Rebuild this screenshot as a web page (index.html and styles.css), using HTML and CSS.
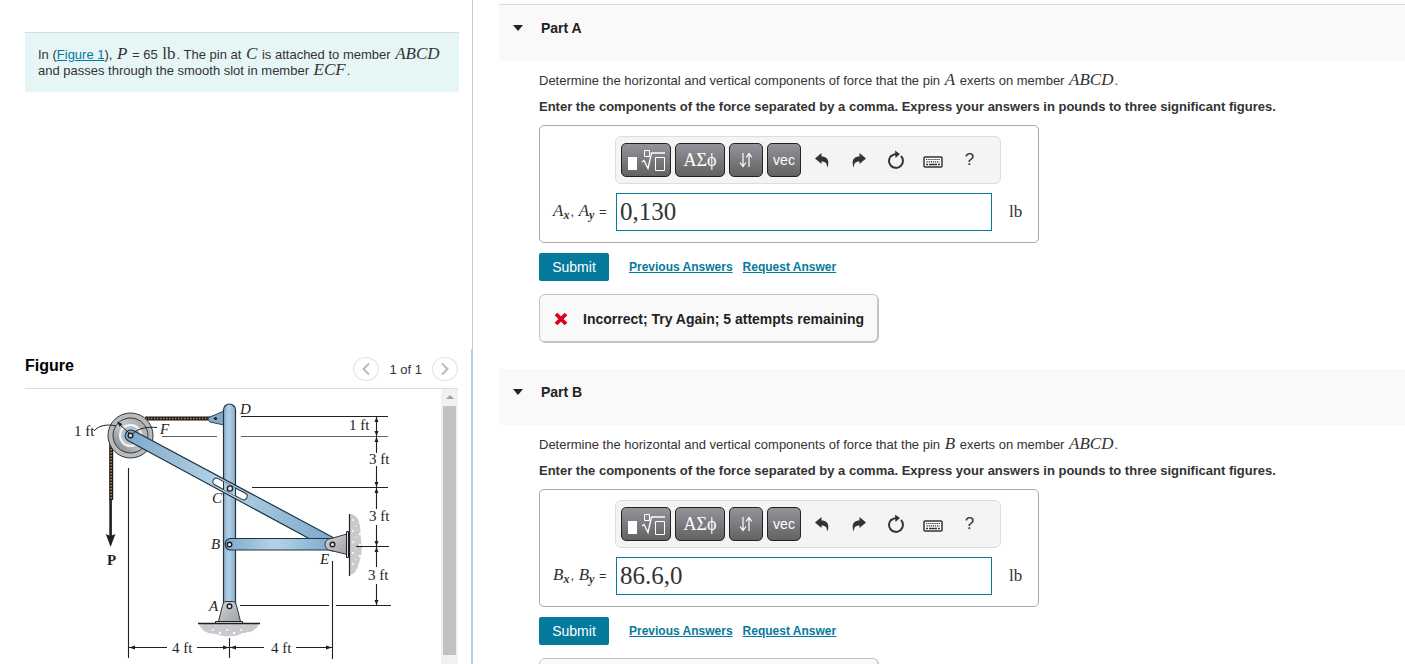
FILE: index.html
```
<!DOCTYPE html>
<html lang="en">
<head>
<meta charset="utf-8">
<title>Pin forces</title>
<link rel="stylesheet" href="styles.css">
</head>
<body>
<svg class="defs" aria-hidden="true">
  <symbol id="i-template" viewBox="0 0 38 24">
    <path d="M1 9h9v13H1z" fill="#fff"/>
    <path d="M17.5 2.500h5v6h-5zM28.500 9.500h9v13h-9z" fill="none" stroke="#fff"/>
    <path d="M15 14l2-1.500 4 8 3.500-15.500H38" fill="none" stroke="#fff" stroke-width="1.300"/>
  </symbol>
  <symbol id="i-updown" viewBox="0 0 14 16">
    <path d="M4 1v13M1 10.500l3 4 3-4M10 15V2M7 5.500l3-4 3 4" fill="none" stroke="#fff" stroke-width="1.200"/>
  </symbol>
  <symbol id="i-undo" viewBox="0 0 14 16">
    <path d="M0 6.500L6.500 1v3.500C11 4.500 13.500 7 13.300 11c0 2-.6 3.500-1.300 4.500.3-4-1.500-6-5.500-6V12z" fill="#333"/>
  </symbol>
  <symbol id="i-reset" viewBox="0 0 18 20">
    <path d="M4.500 5.500A7 7 0 1 0 14 6" fill="none" stroke="#333" stroke-width="2"/>
    <path d="M4 6.200C5.500 4.600 7 4 10 4" fill="none" stroke="#333" stroke-width="2"/>
    <path d="M8 .5L13 4 8.500 8z" fill="#333"/>
  </symbol>
  <symbol id="i-keys" viewBox="0 0 20 12">
    <rect x="1" y="1" width="18" height="10" rx="1" fill="#fff" stroke="#333" stroke-width="1.500"/>
    <path d="M3 3.500h14M3.500 5.800h13" stroke="#333" stroke-width="1.200" stroke-dasharray="1.300 .8"/>
    <path d="M3 8.500h2M6 8.500h8M15 8.500h2" stroke="#333" stroke-width="1.300"/>
  </symbol>
</svg>

<div class="page">
  <aside class="side">
    <section class="prompt-pane">
      <p class="prompt">In (<a href="#figure">Figure 1</a>), <i class="m">P</i> = 65 <span class="m">lb</span>. The pin at <i class="m">C</i> is attached to member <i class="m">ABCD</i> and passes through the smooth slot in member <i class="m">ECF</i>.</p>
    </section>
    <section class="figure-pane" id="figure">
      <header class="figure-head">
        <h2>Figure</h2>
        <div class="pager">
          <button type="button" class="round" aria-label="Previous figure"><svg width="10" height="14" viewBox="0 0 10 14"><path d="M8 1.500L2.500 7 8 12.500" fill="none" stroke="#bbb" stroke-width="2"/></svg></button>
          <span>1 of 1</span>
          <button type="button" class="round" aria-label="Next figure"><svg width="10" height="14" viewBox="0 0 10 14"><path d="M2 1.500L7.500 7 2 12.500" fill="none" stroke="#bbb" stroke-width="2"/></svg></button>
        </div>
      </header>
      <div class="figure-body">
        <svg class="diagram" viewBox="25 389 416 275" role="img" aria-label="Frame with pulley at F, slotted member ECF and member ABCD">
          <defs>
            <linearGradient id="bar" x1="0" x2="1" y1="0" y2="0"><stop offset="0" stop-color="#86abc9"/><stop offset=".4" stop-color="#b4d0e4"/><stop offset="1" stop-color="#8db1cf"/></linearGradient>
            <linearGradient id="beam" x1="0" x2="1" y1="0" y2="0"><stop offset="0" stop-color="#7fa8c8"/><stop offset=".45" stop-color="#b5d3e8"/><stop offset="1" stop-color="#7ba7ca"/></linearGradient>
            <linearGradient id="wheel" x1="0" x2="1" y1="1" y2="0"><stop offset="0" stop-color="#6f777d"/><stop offset=".5" stop-color="#c9ccce"/><stop offset="1" stop-color="#9ea2a4"/></linearGradient>
            <linearGradient id="metal" x1="0" x2="1" y1="0" y2="1"><stop offset="0" stop-color="#d2d4d8"/><stop offset="1" stop-color="#9da2a8"/></linearGradient>
            <pattern id="stone" width="14" height="11" patternUnits="userSpaceOnUse"><path d="M0 0h14v11H0z" fill="#cbc9cd"/><circle cx="3" cy="3" r="1" fill="#fff"/><circle cx="10" cy="6" r="1.200" fill="#fff"/><circle cx="6" cy="9" r=".7" fill="#eee"/></pattern>
            <clipPath id="slot"><rect x="211" y="485.500" width="38" height="7" rx="3.500" transform="rotate(28.300 230 489)"/></clipPath>
          </defs>

          <g stroke="#231f20" stroke-width="1.100" fill="none">
            <path d="M241 416.500h147M252 487.500h136M356 546.500h33M240 605.500h89M336 605.500h55"/>
            <path d="M162 436.500h55M241 436.500h147" stroke="#666"/>
            <path d="M376.500 417v36M376.500 466v43M376.500 525v42M376.500 584v21"/>
            <path d="M128.500 468v190M229.500 638v20M332.500 561v98"/>
            <path d="M129 647.500h38M197 647.500h67M296 647.500h36"/>
          </g>
          <g fill="#231f20">
            <path d="M376.500 417l2 5h-4zM376.500 436l2-5h-4zM376.500 437l2 5h-4zM376.500 487l2-5h-4zM376.500 488l2 5h-4zM376.500 546l2-5h-4zM376.500 547l2 5h-4zM376.500 605l2-5h-4z"/>
            <path d="M129 647.500l6-2v4zM229 647.500l-6-2v4zM230 647.500l6-2v4zM332 647.500l-6-2v4z"/>
          </g>

          <path d="M145 418.500h72M111.200 440v60" stroke="#211a16" stroke-width="4"/>
          <path d="M145 418.500h72M111.200 440v60" stroke="#a28868" stroke-width="1.600" stroke-dasharray="1.500 1.500"/>
          <path d="M110.600 499v38" stroke="#231f20" stroke-width="2.600"/>
          <path d="M110.600 547l-4.800-13 4.800 2 4.800-2z" fill="#231f20"/>

          <circle cx="130.500" cy="435.500" r="22.500" fill="#b8babc" stroke="#35383a"/>
          <circle cx="130.500" cy="435.500" r="17.500" fill="url(#wheel)" stroke="#35383a"/>
          <circle cx="130.500" cy="435.500" r="10.500" fill="#b9c2c8" stroke="#f5f5f5" stroke-width="2"/>

          <path d="M224 411l-14 6q-4 2 0 5l14 3z" fill="#86a9c3" stroke="#29465c"/>
          <circle cx="215.500" cy="418.500" r="1.600" fill="#231f20"/>
          <path d="M223.500 604V410a6 6 0 0 1 12 0v194z" fill="url(#bar)" stroke="#1f3442" stroke-width="1.200"/>

          <path d="M133.200 430.500L336 539v12h-4L127.800 440.500a5.700 5.700 0 0 1 5.400-10z" fill="url(#beam)" stroke="#1f3442" stroke-width="1.200"/>
          <rect x="211" y="485.500" width="38" height="7" rx="3.500" transform="rotate(28.300 230 489)" fill="#fff" stroke="#1f3442"/>
          <path d="M223.500 475h12v30h-12z" fill="#a9c8de" stroke="#1f3442" clip-path="url(#slot)"/>
          <path d="M335 538.500H229.500a6 6 0 0 0 0 11.500H335z" fill="url(#beam)" stroke="#1f3442" stroke-width="1.200"/>

          <path d="M349.500 514c9 0 11 10 11 18s3 16 0 26-4 16-11 17z" fill="url(#stone)"/>
          <path d="M349.500 514v62" stroke="#231f20" stroke-width="1.200"/>
          <path d="M356 546.500h8" stroke="#231f20" stroke-width="1.100"/>
          <path d="M347 534l-16 4.500a6 6 0 0 0 0 12l16 4z" fill="url(#metal)" stroke="#333"/>
          <path d="M346.500 531.500h2v26h-2z" fill="#ddd" stroke="#231f20"/>

          <path d="M199 624h60c-3 7-9 9-16 9-9 5-20 4-27 1-9 0-14-3-17-10z" fill="url(#stone)"/>
          <path d="M198 623.500h62" stroke="#231f20" stroke-width="1.300"/>
          <path d="M218.500 621.500l4-16q1-4 3-4h8q2 0 3 4l4 16z" fill="url(#metal)" stroke="#333"/>
          <path d="M215.500 621.500h27v2h-27z" fill="#bbb" stroke="#231f20"/>

          <g fill="#e9e9e9" stroke="#231f20" stroke-width="1.400">
            <circle cx="130.500" cy="435.500" r="2.300"/><circle cx="230" cy="488.500" r="2.600"/><circle cx="229.500" cy="544.500" r="2.300"/><circle cx="332.500" cy="544.500" r="2.300"/><circle cx="229.500" cy="606.300" r="2.300"/>
          </g>
          <path d="M94 431c5-6 14-7 22-5M118 423l11 10M157 427.500c-10-1-19 1-24 6" fill="none" stroke="#231f20"/>
          <path d="M117 421.500l5.500 2.500-3 2.800z" fill="#231f20"/>

          <g class="dim">
            <text x="74" y="436">1 ft</text><text x="349" y="430">1 ft</text><text x="369" y="464">3 ft</text><text x="369" y="521">3 ft</text><text x="368" y="580">3 ft</text><text x="172" y="653">4 ft</text><text x="271" y="653">4 ft</text>
          </g>
          <g class="dim pt">
            <text x="240" y="414">D</text><text x="160" y="434">F</text><text x="212" y="503">C</text><text x="211" y="549">B</text><text x="320" y="564">E</text><text x="209" y="611">A</text>
          </g>
          <text class="dim load" x="107" y="565">P</text>
        </svg>
        <div class="track" aria-hidden="true"><span class="up"></span><span class="thumb"></span></div>
      </div>
    </section>
  </aside>

  <main class="main">
    <section class="part">
      <header class="part-head first"><span class="caret"></span><h2>Part A</h2></header>
      <div class="part-body">
        <p class="ask">Determine the horizontal and vertical components of force that the pin <i class="m">A</i> exerts on member <i class="m">ABCD</i>.</p>
        <p class="hint">Enter the components of the force separated by a comma. Express your answers in pounds to three significant figures.</p>
        <div class="answer">
          <div class="tools">
            <button type="button" class="key wide" aria-label="Templates"><svg width="38" height="24"><use href="#i-template"/></svg></button>
            <button type="button" class="key wide greek">ΑΣϕ</button>
            <button type="button" class="key" aria-label="Subscript and superscript"><svg width="14" height="16"><use href="#i-updown"/></svg></button>
            <button type="button" class="key">vec</button>
            <button type="button" class="tool" aria-label="Undo"><svg width="14" height="16"><use href="#i-undo"/></svg></button>
            <button type="button" class="tool" aria-label="Redo"><svg class="flip" width="14" height="16"><use href="#i-undo"/></svg></button>
            <button type="button" class="tool" aria-label="Reset"><svg width="18" height="20"><use href="#i-reset"/></svg></button>
            <button type="button" class="tool" aria-label="Keyboard shortcuts"><svg class="keys" width="20" height="12"><use href="#i-keys"/></svg></button>
            <button type="button" class="tool">?</button>
          </div>
          <label class="name" for="ans-a"><i class="m">A<sub>x</sub></i>, <i class="m">A<sub>y</sub></i> =</label>
          <input class="value" id="ans-a" type="text" value="0,130">
          <span class="unit">lb</span>
        </div>
        <div class="actions"><button type="button" class="submit">Submit</button><a href="#previous">Previous Answers</a><a href="#request">Request Answer</a></div>
        <div class="feedback"><svg width="14" height="14" viewBox="0 0 14 14"><path d="M2 2l10 10M12 2L2 12" stroke="#d9001b" stroke-width="3.800"/></svg>Incorrect; Try Again; 5 attempts remaining</div>
      </div>
    </section>

    <section class="part">
      <header class="part-head"><span class="caret"></span><h2>Part B</h2></header>
      <div class="part-body">
        <p class="ask">Determine the horizontal and vertical components of force that the pin <i class="m">B</i> exerts on member <i class="m">ABCD</i>.</p>
        <p class="hint">Enter the components of the force separated by a comma. Express your answers in pounds to three significant figures.</p>
        <div class="answer">
          <div class="tools">
            <button type="button" class="key wide" aria-label="Templates"><svg width="38" height="24"><use href="#i-template"/></svg></button>
            <button type="button" class="key wide greek">ΑΣϕ</button>
            <button type="button" class="key" aria-label="Subscript and superscript"><svg width="14" height="16"><use href="#i-updown"/></svg></button>
            <button type="button" class="key">vec</button>
            <button type="button" class="tool" aria-label="Undo"><svg width="14" height="16"><use href="#i-undo"/></svg></button>
            <button type="button" class="tool" aria-label="Redo"><svg class="flip" width="14" height="16"><use href="#i-undo"/></svg></button>
            <button type="button" class="tool" aria-label="Reset"><svg width="18" height="20"><use href="#i-reset"/></svg></button>
            <button type="button" class="tool" aria-label="Keyboard shortcuts"><svg class="keys" width="20" height="12"><use href="#i-keys"/></svg></button>
            <button type="button" class="tool">?</button>
          </div>
          <label class="name" for="ans-b"><i class="m">B<sub>x</sub></i>, <i class="m">B<sub>y</sub></i> =</label>
          <input class="value" id="ans-b" type="text" value="86.6,0">
          <span class="unit">lb</span>
        </div>
        <div class="actions"><button type="button" class="submit">Submit</button><a href="#previous">Previous Answers</a><a href="#request">Request Answer</a></div>
        <div class="feedback"></div>
      </div>
    </section>
  </main>
</div>
</body>
</html>
```
FILE: styles.css
```
* { box-sizing: border-box; }
body { margin: 0; font: 13px/16px "Liberation Sans", Arial, sans-serif; color: #333; background: #fff; }
p, h2 { margin: 0; }
a { color: #047a9c; text-decoration: underline; }
button { font-family: inherit; margin: 0; padding: 0; cursor: pointer; }
.defs { display: none; }
.m { font-family: "Liberation Serif", "Times New Roman", serif; font-size: 17px; line-height: 1px; margin: 0 1px; }

.page { display: grid; grid-template-columns: 473px minmax(0, 1fr); height: 100vh; overflow: hidden; }

.side { display: flex; flex-direction: column; min-height: 0; }
.prompt-pane { flex: 1; padding: 32px 13px 0 25px; border-right: 1px solid #b9cfe2; }
.prompt { padding: 14px 12px 12px 13px; background: #e6f6f6; border-top: 1px solid #d6dcdc; min-height: 60px; }
.figure-pane { padding: 0 13px 0 25px; border-right: 2px solid #b9cfe2; }
.figure-head { display: flex; justify-content: space-between; align-items: center; height: 40px; border-bottom: 1px solid #ddd; }
.figure-head h2 { font-size: 16px; line-height: 20px; color: #000; padding-bottom: 6px; }
.pager { display: flex; align-items: center; gap: 10px; font-size: 13px; }
.pager span { padding-top: 2px; }
.round { display: flex; align-items: center; justify-content: center; width: 26px; height: 24px; border: 1px solid #e2e2e2; border-radius: 50%; background: #fff; }
.figure-body { display: flex; }
.diagram { flex: 1; min-width: 0; display: block; }
.dim { font: 15px "Liberation Serif", "Times New Roman", serif; fill: #231f20; }
.pt { font-style: italic; }
.load { font-weight: bold; }
.track { width: 17px; padding: 6px 2px 9px; background: #f1f1f1; display: flex; flex-direction: column; align-items: center; gap: 7px; }
.up { border: 4px solid transparent; border-top: 0; border-bottom-color: #a3a3a3; }
.thumb { flex: 1; width: 100%; background: #c1c1c1; }

.main { padding: 4px 0 0 26px; min-width: 0; overflow: hidden; }
.part { margin-bottom: 26px; }
.part-head { display: flex; align-items: flex-start; gap: 18px; height: 56px; padding: 15px 14px; background: #f9f9f9; }
.part-head.first { height: 57px; border-top: 1px solid #ddd; }
.part-head h2 { font-size: 14px; line-height: 16px; color: #222; }
.caret { margin-top: 5px; border: 5px solid transparent; border-top: 6px solid #222; border-bottom: 0; }
.part-body { padding: 12px 16px 0 40px; }
.ask { margin-bottom: 10px; }
.hint { font-weight: bold; margin-bottom: 10px; }
.answer { display: grid; grid-template-columns: 64px 1fr 36px; row-gap: 9px; align-items: center; width: 500px; max-width: 100%; padding: 10px 10px 11px 12px; border: 1px solid #aaa; border-radius: 5px; }
.tools { grid-column: 2 / 4; justify-self: start; display: flex; align-items: center; gap: 4px; width: 386px; height: 48px; margin-left: -1px; padding: 0 5px; background: #f4f4f4; border: 1px solid #ddd; border-radius: 6px; }
.key { display: flex; align-items: center; justify-content: center; width: 34px; height: 34px; border: 1px solid #222; border-radius: 5px; background: linear-gradient(#94939b, #626262); color: #fff; font-size: 14px; }
.wide { width: 50px; }
.greek { font-family: "Liberation Serif", "Times New Roman", serif; font-size: 18px; }
.tool { display: flex; align-items: center; justify-content: center; width: 33px; height: 34px; border: 0; background: none; color: #333; font-size: 17px; }
.flip { transform: scaleX(-1); }
.keys { margin-top: 4px; }
.name { white-space: nowrap; }
.name sub { font-size: 12px; font-weight: bold; line-height: 1px; vertical-align: -3px; }
.value { width: 100%; height: 38px; padding: 0 3px; border: 1px solid #047a9c; border-radius: 0; background: #fff; color: #333; font: 25px "Liberation Serif", "Times New Roman", serif; }
.unit { padding-left: 17px; font: 17px/18px "Liberation Serif", "Times New Roman", serif; }
.actions { display: flex; align-items: center; margin: 10px 0 13px; font-size: 12px; font-weight: bold; }
.actions a { margin-right: 10px; }
.submit { width: 70px; height: 28px; margin-right: 20px; border: 0; border-radius: 2px; background: #047a9c; color: #fff; font-size: 14px; }
.feedback { display: flex; align-items: center; gap: 15px; width: 340px; max-width: 100%; height: 49px; padding: 0 8px 0 14px; border: 1px solid #c4c4c4; border-radius: 6px; background: #f9f9f9; box-shadow: inset -1px -1px 0 #c4c4c4; font-size: 14px; font-weight: bold; color: #222; white-space: nowrap; }
```
